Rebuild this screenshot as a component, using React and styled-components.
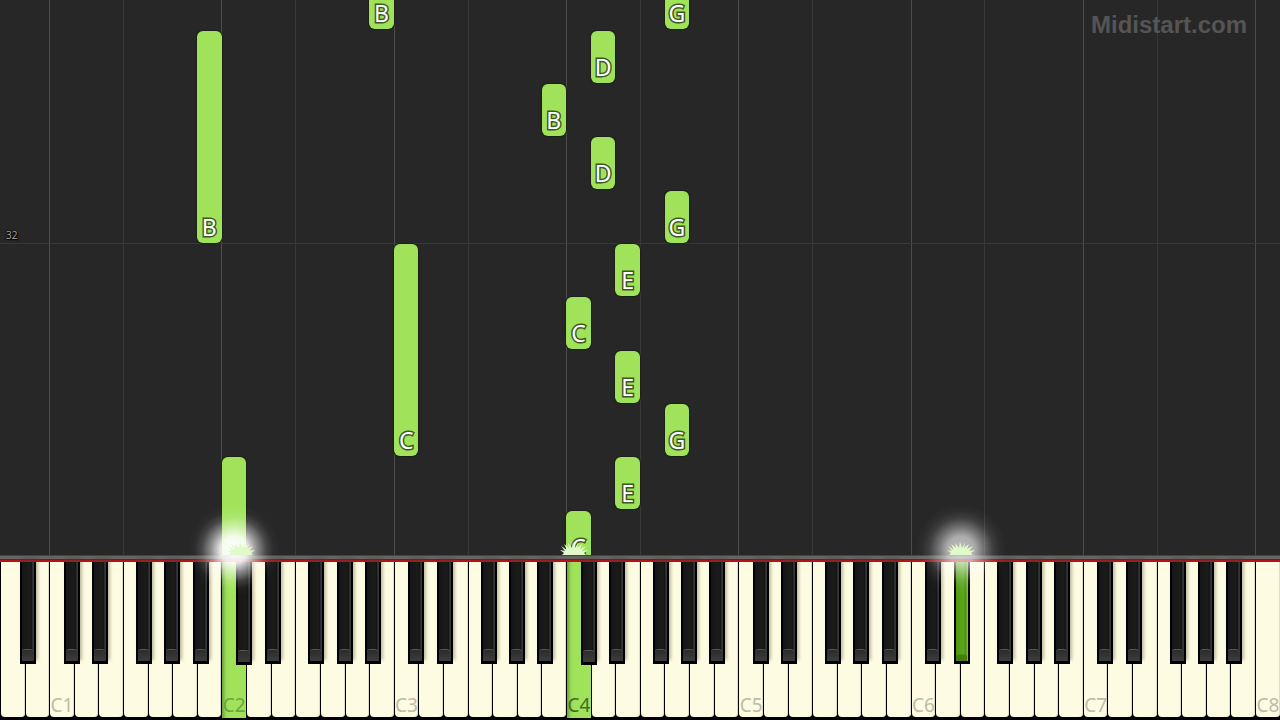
import React from "react";
import styled, { createGlobalStyle, css } from "styled-components";

const KEY_COUNT = 52;
const LETTERS = ["A", "B", "C", "D", "E", "F", "G"];
const BEAT = 160 / 3;

/* How far into its white key each black key begins, in percent. */
const SHARP_OFFSET = { A: 83, C: 59, D: 75, F: 53, G: 68 };

const keys = Array.from({ length: KEY_COUNT }, (_, index) => {
  const letter = LETTERS[index % 7];
  return {
    index,
    letter,
    octave: Math.floor((index + 5) / 7),
    hasSharp: letter in SHARP_OFFSET && index < KEY_COUNT - 1,
  };
});

/* key: white key index, start: beats above the keyboard, length: beats */
const notes = [
  { key: 9, start: -3, length: 4, name: "" },
  { key: 23, start: -1, length: 1, name: "C" },
  { key: 25, start: 0, length: 1, name: "E" },
  { key: 27, start: 1, length: 1, name: "G" },
  { key: 16, start: 1, length: 4, name: "C" },
  { key: 25, start: 2, length: 1, name: "E" },
  { key: 23, start: 3, length: 1, name: "C" },
  { key: 25, start: 4, length: 1, name: "E" },
  { key: 27, start: 5, length: 1, name: "G" },
  { key: 8, start: 5, length: 4, name: "B" },
  { key: 24, start: 6, length: 1, name: "D" },
  { key: 22, start: 7, length: 1, name: "B" },
  { key: 24, start: 8, length: 1, name: "D" },
  { key: 27, start: 9, length: 1, name: "G" },
  { key: 15, start: 9, length: 4, name: "B" },
];

const GlobalStyle = createGlobalStyle`
  *, *::before, *::after { box-sizing: border-box; }
  body { margin: 0; background: #272727; overflow: hidden; }
`;

const Page = styled.main`
  display: flex;
  flex-direction: column;
  height: 100vh;
  font-family: "Noto Sans", sans-serif;
`;

/* The lanes, the bar line, the notes and the watermark share one grid cell. */
const Roll = styled.section`
  position: relative;
  flex: 1;
  display: grid;
  grid-template: minmax(0, 1fr) / minmax(0, 1fr);
  overflow: hidden;
  background: #272727;

  & > * {
    grid-area: 1 / 1;
  }
`;

const Lanes = styled.div`
  display: flex;
`;

const lineColor = { C: "#4d4d4d", F: "#383838" };

const Lane = styled.div`
  flex: 1 1 0;
  border-left: 1px solid ${(p) => lineColor[p.$letter] || "transparent"};
`;

const Bar = styled.div`
  align-self: end;
  margin-bottom: 311px;
  padding-left: 6px;
  border-bottom: 1px solid #383838;
  font-size: 10px;
  line-height: 16px;
  color: #a0a0a0;
  text-shadow: 0 0 2px #000, 0 0 2px #000, 1px 1px 1px #000;
`;

const Note = styled.div`
  position: absolute;
  width: calc(100% / 52);
  display: flex;
  align-items: flex-end;
  justify-content: center;
  border-radius: 6px;
  background: #a0e35b;
  box-shadow: 0 0 1px 1px #1d2118;
  color: #fff;
  font-size: 23px;
  font-weight: 400;
  line-height: 32px;
  -webkit-text-stroke: 3px #3d5625;
  paint-order: stroke fill;
`;

const Watermark = styled.div`
  align-self: start;
  justify-self: end;
  padding: 11px 33px;
  font: bold 24px/28px "Liberation Sans", Arial, sans-serif;
  color: #555;
`;

const Keyboard = styled.section`
  position: relative;
  height: 165px;
  display: flex;
  flex-direction: column;
  padding-bottom: 3px;
  background: #000;
`;

const Rail = styled.div`
  height: 5px;
  border-top: 1px solid #444;
  border-bottom: 1px solid #383838;
  background: #646464;
`;

const Felt = styled.div`
  height: 2px;
  background: #b5121b;
`;

const KeyRow = styled.div`
  flex: 1;
  display: flex;
`;

const KeySlot = styled.div`
  position: relative;
  flex: 1 1 0;
  display: flex;
  padding-left: 1px;
`;

const WhiteKey = styled.button`
  flex: 1;
  display: flex;
  align-items: flex-end;
  justify-content: center;
  min-width: 0;
  margin: 0;
  padding: 0;
  border: 0;
  border-radius: 0 0 4px 4px;
  background: #fdfbe1;
  box-shadow: inset -1px 0 #dedcc6;
  font-family: inherit;
  font-size: 19px;
  line-height: 24px;
  color: #bebca8;
  ${(p) =>
    p.$pressed &&
    css`
      margin-bottom: -1px;
      padding-bottom: 1px;
      border-radius: 0;
      background: linear-gradient(90deg, #6da03c 0, #98db56 4px, #a0e35b 7px);
      box-shadow: none;
      color: ${p.$pressed === "soft" ? "#6fa340" : "#456b25"};
    `}
`;

const BlackKey = styled.button`
  position: absolute;
  z-index: 1;
  top: 0;
  left: ${(p) => SHARP_OFFSET[p.$letter]}%;
  width: 65%;
  height: ${(p) => (p.$lowered ? 103 : 102)}px;
  padding: 0;
  border: solid #000;
  border-width: 0 2px 3px;
  background: linear-gradient(
    90deg,
    #161616 0,
    #1b1b1b 8px,
    #121212 10px,
    #4a4a4a 11px,
    #222 12px
  );
  box-shadow: 2px -4px 3px rgba(70, 65, 40, 0.35);

  &::after {
    content: "";
    display: block;
    height: 12px;
    margin: 87px 1px 0 0;
    border-top: 1px solid #555;
    border-radius: 3px 3px 0 0;
    background: linear-gradient(#2c2c2c, #3c3c3c);
  }

  ${(p) =>
    p.$pressed &&
    css`
      background: linear-gradient(90deg, #4f970f, #5aa81b 60%, #4c8d12 10px, #78bd3d 11px);
      box-shadow: none;

      &::after {
        height: 7px;
        margin-top: 92px;
        border-top: 1px solid #4e8f14;
        background: #417e0c;
      }
    `}
`;

const Glow = styled.div`
  position: absolute;
  z-index: 2;
  left: ${(p) => p.$left};
  top: -58px;
  width: 92px;
  height: 92px;
  margin-left: -46px;
  pointer-events: none;
  background: radial-gradient(
    closest-side,
    rgba(255, 255, 255, ${(p) => p.$strength}) 0,
    rgba(255, 255, 255, ${(p) => p.$strength * 0.88}) 30%,
    rgba(255, 255, 255, ${(p) => p.$strength * 0.48}) 50%,
    rgba(255, 255, 255, ${(p) => p.$strength * 0.15}) 70%,
    rgba(255, 255, 255, 0.03) 85%,
    rgba(255, 255, 255, 0) 100%
  );
`;

const Sparks = styled.svg`
  position: absolute;
  z-index: 3;
  top: -20px;
  left: ${(p) => p.$left};
  width: 28px;
  height: 13px;
  margin-left: -14px;
  fill: #e2fac9;
  pointer-events: none;
`;

function Burst({ left }) {
  return (
    <Sparks $left={left} viewBox="0 0 28 13" aria-hidden="true">
      <path d="M2 13 L4 11 L0 8 L5 9 L1 4 L7 8 L4 2 L9 6 L8 1 L12 6 L13 0 L15 6 L18 1 L17 6 L22 2 L20 7 L26 4 L22 9 L28 8 L24 11 L26 13 Z" />
    </Sparks>
  );
}

function PianoRoll() {
  return (
    <Roll aria-label="Falling notes">
      <Lanes>
        {keys.map((k) => (
          <Lane key={k.index} $letter={k.letter} />
        ))}
      </Lanes>
      <Bar>32</Bar>
      {notes.map((n) => (
        <Note
          key={`${n.key}:${n.start}`}
          style={{
            left: `${(n.key / KEY_COUNT) * 100}%`,
            bottom: Math.floor(46 + n.start * BEAT),
            height: Math.floor(n.length * BEAT) - 1,
          }}
        >
          {n.name}
        </Note>
      ))}
      <Watermark>Midistart.com</Watermark>
    </Roll>
  );
}

function Piano() {
  const pressedWhite = { 9: "soft", 23: "firm" };
  const pressedBlack = 38;
  return (
    <Keyboard aria-label="Piano keyboard">
      <Rail />
      <Felt />
      <KeyRow>
        {keys.map((k) => (
          <KeySlot key={k.index}>
            <WhiteKey
              type="button"
              aria-label={`${k.letter}${k.octave}`}
              $pressed={pressedWhite[k.index]}
            >
              {k.letter === "C" && `C${k.octave}`}
            </WhiteKey>
            {k.hasSharp && (
              <BlackKey
                type="button"
                aria-label={`${k.letter} sharp ${k.octave}`}
                $letter={k.letter}
                $lowered={Boolean(pressedWhite[k.index])}
                $pressed={k.index === pressedBlack}
              />
            )}
            {k.index === pressedBlack && (
              <>
                <Glow $left="105%" $strength={0.7} />
                <Burst left="105%" />
              </>
            )}
            {k.index === 9 && (
              <>
                <Burst left="80%" />
                <Glow $left="50%" $strength={1} />
              </>
            )}
            {k.index === 23 && <Burst left="34%" />}
          </KeySlot>
        ))}
      </KeyRow>
    </Keyboard>
  );
}

export default function App() {
  return (
    <Page>
      <GlobalStyle />
      <PianoRoll />
      <Piano />
    </Page>
  );
}
